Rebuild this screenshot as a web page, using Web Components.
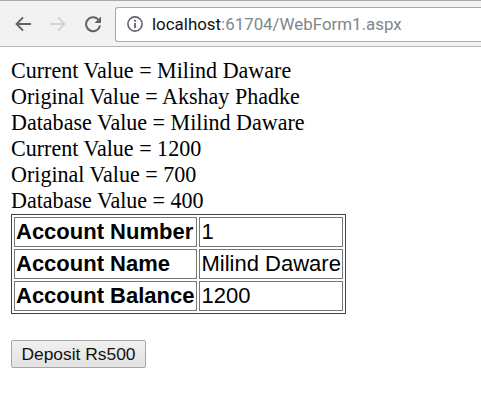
<!DOCTYPE html>
<html>
<head>
<meta charset="utf-8">
<title>WebForm1</title>
<style>
  html, body { margin: 0; padding: 0; background: #fff; overflow: hidden; }
</style>
</head>
<body>
<browser-bar url-host="localhost" url-rest=":61704/WebForm1.aspx"></browser-bar>
<page-content>
  <value-line>Current Value = Milind Daware</value-line>
  <value-line>Original Value = Akshay Phadke</value-line>
  <value-line>Database Value = Milind Daware</value-line>
  <value-line>Current Value = 1200</value-line>
  <value-line>Original Value = 700</value-line>
  <value-line>Database Value = 400</value-line>
  <account-table></account-table>
  <deposit-button>Deposit Rs500</deposit-button>
</page-content>
<script>
class BrowserBar extends HTMLElement {
  constructor() {
    super();
    this.attachShadow({ mode: 'open' });
  }

  connectedCallback() {
    const host = this.getAttribute('url-host');
    const rest = this.getAttribute('url-rest');
    this.shadowRoot.innerHTML = `
      <style>
        :host {
          display: flex;
          align-items: center;
          box-sizing: border-box;
          height: 47px;
          background: #f2f2f2;
          border-top: 1px solid #a8a8a8;
          border-bottom: 1px solid #b4b4b4;
          padding: 0 0 0 14px;
        }
        svg { display: block; flex: none; }
        .nav { display: flex; align-items: center; gap: 17px; margin-right: 13px; }
        .omnibox {
          flex: 1;
          display: flex;
          align-items: center;
          height: 35px;
          box-sizing: border-box;
          margin-top: 1px;
          background: #fff;
          border: 1px solid #a9a9a9;
          border-right: none;
          border-radius: 3px 0 0 3px;
          padding-left: 11px;
          font: 16.9px Roboto, "Liberation Sans", sans-serif;
          color: #80868b;
        }
        .omnibox svg { margin-right: 9px; }
        .host { color: #111; }
      </style>
      <div class="nav">
        <svg width="18" height="18" viewBox="0 0 18 18" fill="none" stroke="#5f6368" stroke-width="1.8">
          <path d="M17 9H2.5M9 2.5L2.5 9l6.5 6.5"/>
        </svg>
        <svg width="18" height="18" viewBox="0 0 18 18" fill="none" stroke="#d2d2d2" stroke-width="1.8">
          <path d="M1 9h14.5M9 2.5L15.5 9 9 15.5"/>
        </svg>
        <svg width="18" height="18" viewBox="0 0 18 18" fill="none" stroke="#5f6368" stroke-width="2">
          <path d="M16 10.5A7 7 0 1 1 14 4.2"/>
          <path d="M17 1.5v6.5h-6.5z" fill="#5f6368" stroke="none"/>
        </svg>
      </div>
      <div class="omnibox">
        <svg width="16" height="16" viewBox="0 0 16 16" fill="none">
          <circle cx="8" cy="8" r="7.1" stroke="#5f6368" stroke-width="1.6"/>
          <path d="M8 7v5" stroke="#5f6368" stroke-width="1.8"/>
          <circle cx="8" cy="4.8" r="1.1" fill="#5f6368"/>
        </svg>
        <span><span class="host">${host}</span>${rest}</span>
      </div>
    `;
  }
}
customElements.define('browser-bar', BrowserBar);

class PageContent extends HTMLElement {
  constructor() {
    super();
    this.attachShadow({ mode: 'open' });
    this.shadowRoot.innerHTML = `
      <style>
        :host {
          display: block;
          padding: 11px 11px 0;
          font-family: "Liberation Serif", "Times New Roman", serif;
          font-size: 22.05px;
          color: #000;
        }
      </style>
      <slot></slot>
    `;
  }
}
customElements.define('page-content', PageContent);

class ValueLine extends HTMLElement {
  constructor() {
    super();
    this.attachShadow({ mode: 'open' });
    this.shadowRoot.innerHTML = `
      <style>
        :host { display: block; line-height: 26px; white-space: nowrap; }
      </style>
      <slot></slot>
    `;
  }
}
customElements.define('value-line', ValueLine);

class AccountTable extends HTMLElement {
  constructor() {
    super();
    this.attachShadow({ mode: 'open' });
    const rows = [
      ['Account Number', '1'],
      ['Account Name', 'Milind Daware'],
      ['Account Balance', '1200'],
    ];
    this.shadowRoot.innerHTML = `
      <style>
        :host { display: block; }
        table {
          border-collapse: separate;
          border-spacing: 2px;
          border: 1px solid #444;
          font: 22px "Liberation Sans", Arial, sans-serif;
          color: #000;
        }
        th, td {
          box-sizing: border-box;
          border: 1px solid #777;
          padding: 0 1px;
          height: 30px;
          line-height: 26px;
          text-align: left;
          white-space: nowrap;
        }
        th { font-weight: bold; }
        td { font-weight: normal; padding-left: 2px; }
      </style>
      <table>
        ${rows.map(([label, value]) => `<tr><th>${label}</th><td>${value}</td></tr>`).join('')}
      </table>
    `;
  }
}
customElements.define('account-table', AccountTable);

class DepositButton extends HTMLElement {
  constructor() {
    super();
    this.attachShadow({ mode: 'open' });
    this.shadowRoot.innerHTML = `
      <style>
        :host { display: block; margin-top: 26px; }
        button {
          display: block;
          box-sizing: border-box;
          width: 135px;
          height: 28px;
          padding: 0;
          background: linear-gradient(#f0f0f0, #e2e2e2);
          border: 1px solid #a6a6a6;
          border-radius: 2px;
          font: 17.4px "Liberation Sans", Arial, sans-serif;
          color: #111;
        }
      </style>
      <button type="button"><slot></slot></button>
    `;
  }
}
customElements.define('deposit-button', DepositButton);
</script>
</body>
</html>
